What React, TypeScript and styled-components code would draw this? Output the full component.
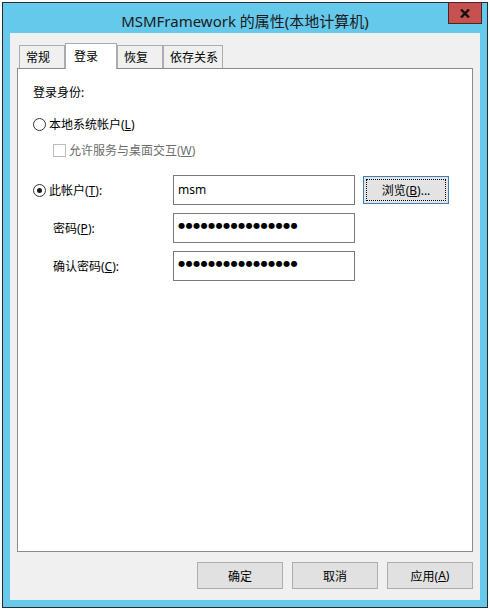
import { createGlobalStyle, styled } from "styled-components";

const GlobalStyle = createGlobalStyle`
  html, body {
    margin: 0;
    padding: 0;
    background: #ffffff;
  }
  body {
    font-family: "Noto Sans", "Noto Sans CJK SC", sans-serif;
    font-size: 12px;
    color: #000000;
  }
`;

const Window = styled.div`
  box-sizing: border-box;
  width: 486px;
  height: 606px;
  margin: 2px 0 0 2px;
  border: 1px solid #2b2b2b;
  background: #65c9ec;
  display: flex;
  flex-direction: column;
`;

const TitleBar = styled.div`
  height: 30px;
  display: grid;
  grid-template-columns: 1fr auto 1fr;
`;

const Title = styled.div`
  grid-column: 2;
  align-self: center;
  margin-top: 4px;
  font-size: 15px;
  color: #1b1b1b;
  white-space: nowrap;
`;

const CloseButton = styled.div`
  grid-column: 3;
  justify-self: end;
  align-self: start;
  box-sizing: border-box;
  width: 34px;
  height: 22px;
  margin: -1px 5px 0 0;
  background: #c75050;
  border: 1px solid #4a2624;
  display: flex;
  align-items: center;
  justify-content: center;
`;

const Client = styled.div`
  flex: 1;
  margin: 0 7px 7px;
  background: #f0f0f0;
  padding: 10px 7px 11px;
  display: flex;
  flex-direction: column;
`;

const TabStrip = styled.div`
  height: 25px;
  padding-left: 2px;
  display: flex;
  align-items: flex-end;
`;

const Tab = styled.div<{ $active?: boolean; $w: number }>`
  box-sizing: border-box;
  position: relative;
  width: ${(p) => p.$w}px;
  height: ${(p) => (p.$active ? 26 : 23)}px;
  margin-bottom: ${(p) => (p.$active ? -1 : 0)}px;
  z-index: ${(p) => (p.$active ? 1 : 0)};
  padding: ${(p) => (p.$active ? "0 0 2px 8px" : "0 0 0 6px")};
  border: 1px solid #acacac;
  border-bottom: none;
  background: ${(p) => (p.$active ? "#ffffff" : "#f0f0f0")};
  display: flex;
  align-items: center;
  white-space: nowrap;
`;

const Panel = styled.div`
  flex: 1;
  background: #ffffff;
  border: 1px solid #8b8b8b;
  padding: 16px 0 0 15px;
`;

const Heading = styled.div`
  line-height: 16px;
`;

const OptionRow = styled.div<{ $indent?: number; $top: number }>`
  display: flex;
  align-items: center;
  gap: 3px;
  height: 16px;
  margin-top: ${(p) => p.$top}px;
  margin-left: ${(p) => p.$indent ?? 0}px;
`;

const Radio = styled.span<{ $checked?: boolean }>`
  box-sizing: border-box;
  width: 13px;
  height: 13px;
  border-radius: 50%;
  border: 1px solid #333333;
  background: #ffffff;
  display: flex;
  align-items: center;
  justify-content: center;
  &::after {
    content: "";
    width: 5px;
    height: 5px;
    border-radius: 50%;
    background: #1a1a1a;
    display: ${(p) => (p.$checked ? "block" : "none")};
  }
`;

const CheckBox = styled.span`
  box-sizing: border-box;
  width: 13px;
  height: 13px;
  border: 1px solid #bcbcbc;
  background: #ffffff;
`;

const Label = styled.span<{ $disabled?: boolean }>`
  color: ${(p) => (p.$disabled ? "#6d6d6d" : "#000000")};
  white-space: nowrap;
`;

const Key = styled.u`
  text-underline-offset: 1px;
`;

const AccountGrid = styled.div`
  margin-top: 17px;
  display: grid;
  grid-template-columns: 132px 182px 86px;
  grid-auto-rows: 30px;
  column-gap: 8px;
  row-gap: 8px;
  align-items: center;
`;

const FieldLabel = styled.div<{ $indent?: number }>`
  display: flex;
  align-items: center;
  gap: 3px;
  padding-left: ${(p) => p.$indent ?? 0}px;
`;

const TextBox = styled.div`
  box-sizing: border-box;
  height: 30px;
  border: 1px solid #7a7a7a;
  background: #ffffff;
  padding: 0 0 2px 4px;
  display: flex;
  align-items: center;
`;

const Dots = styled.div`
  display: flex;
  font-family: "DejaVu Sans", sans-serif;
  font-size: 8px;
  line-height: 8px;
  margin-top: -2px;
`;

const Dot = styled.span`
  width: 7.5px;
  text-align: center;
`;

const Button = styled.div<{ $focused?: boolean }>`
  box-sizing: border-box;
  width: 86px;
  height: 27px;
  border: 1px solid ${(p) => (p.$focused ? "#3c7fb1" : "#adadad")};
  background: ${(p) => (p.$focused ? "#e3e3e3" : "#e1e1e1")};
  padding: 2px;
  display: flex;
`;

const ButtonFace = styled.div<{ $focused?: boolean }>`
  flex: 1;
  display: flex;
  align-items: center;
  justify-content: center;
  border: 1px dotted ${(p) => (p.$focused ? "#000000" : "transparent")};
`;

const BrowseButton = styled(Button)`
  height: 28px;
  align-self: start;
  margin-top: 1px;
`;

const ButtonRow = styled.div`
  margin-top: 10px;
  display: flex;
  justify-content: flex-end;
  gap: 9px;
`;

function PasswordDots({ count }: { count: number }) {
  return (
    <Dots>
      {Array.from({ length: count }, (_, i) => (
        <Dot key={i}>●</Dot>
      ))}
    </Dots>
  );
}

export default function App() {
  return (
    <>
      <GlobalStyle />
      <Window>
        <TitleBar>
          <Title>MSMFramework 的属性(本地计算机)</Title>
          <CloseButton>
            <svg width="10" height="9" viewBox="0 0 10 9">
              <path d="M1 0.5 L9 8.5 M9 0.5 L1 8.5" stroke="#111" strokeWidth="2.4" />
            </svg>
          </CloseButton>
        </TitleBar>
        <Client>
          <TabStrip>
            <Tab $w={46}>常规</Tab>
            <Tab $w={52} $active>
              登录
            </Tab>
            <Tab $w={46}>恢复</Tab>
            <Tab $w={60}>依存关系</Tab>
          </TabStrip>
          <Panel>
            <Heading>登录身份:</Heading>
            <OptionRow $top={15}>
              <Radio />
              <Label>
                本地系统帐户(<Key>L</Key>)
              </Label>
            </OptionRow>
            <OptionRow $top={10} $indent={20}>
              <CheckBox />
              <Label $disabled>
                允许服务与桌面交互(<Key>W</Key>)
              </Label>
            </OptionRow>
            <AccountGrid>
              <FieldLabel>
                <Radio $checked />
                <Label>
                  此帐户(<Key>T</Key>):
                </Label>
              </FieldLabel>
              <TextBox>msm</TextBox>
              <BrowseButton $focused>
                <ButtonFace $focused>
                  浏览(<Key>B</Key>)...
                </ButtonFace>
              </BrowseButton>
              <FieldLabel $indent={20}>
                <Label>
                  密码(<Key>P</Key>):
                </Label>
              </FieldLabel>
              <TextBox>
                <PasswordDots count={16} />
              </TextBox>
              <div />
              <FieldLabel $indent={20}>
                <Label>
                  确认密码(<Key>C</Key>):
                </Label>
              </FieldLabel>
              <TextBox>
                <PasswordDots count={16} />
              </TextBox>
            </AccountGrid>
          </Panel>
          <ButtonRow>
            <Button>
              <ButtonFace>确定</ButtonFace>
            </Button>
            <Button>
              <ButtonFace>取消</ButtonFace>
            </Button>
            <Button>
              <ButtonFace>
                应用(<Key>A</Key>)
              </ButtonFace>
            </Button>
          </ButtonRow>
        </Client>
      </Window>
    </>
  );
}
